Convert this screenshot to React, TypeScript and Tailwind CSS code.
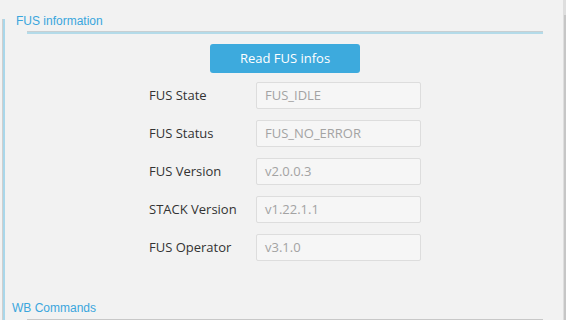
const fields = [
  { label: 'FUS State', value: 'FUS_IDLE' },
  { label: 'FUS Status', value: 'FUS_NO_ERROR' },
  { label: 'FUS Version', value: 'v2.0.0.3' },
  { label: 'STACK Version', value: 'v1.22.1.1' },
  { label: 'FUS Operator', value: 'v3.1.0' },
];

function GroupTitle({ text, indent }: { text: string; indent: string }) {
  return (
    <div className={`${indent} h-[14px] text-[12px] leading-[14px] text-[#3aa6dd] font-['Liberation_Sans',Arial,sans-serif]`}>
      {text}
    </div>
  );
}

export default function App() {
  return (
    <div className="w-[566px] h-[320px] bg-[#f2f2f2] flex overflow-hidden font-['Open_Sans',sans-serif]">
      {/* left group rail */}
      <div className="w-[5px] pl-[2px] pt-[19px] flex">
        <div className="w-[3px] border-l border-[#cfcfcf] bg-[#a9d7ea]" />
      </div>

      <main className="flex-1 flex flex-col">
        <div className="pt-[14px]">
          <GroupTitle text="FUS information" indent="pl-[11px]" />
        </div>
        <div className="mt-[3px] ml-[22px] mr-[20px]">
          <div className="h-px bg-[#c8cfd2]" />
          <div className="h-[2px] bg-[#b4dbe9]" />
        </div>

        <button className="mt-[10px] ml-[205px] w-[150px] h-[29px] rounded-[3px] bg-[#3daadd] text-white text-[13px] leading-[29px]">
          Read FUS infos
        </button>

        <div className="mt-[9px] flex flex-col gap-[11px] ml-[144px]">
          {fields.map((f) => (
            <div key={f.label} className="flex items-center">
              <span className="w-[107px] text-[13px] text-[#333333]">{f.label}</span>
              <div className="w-[165px] h-[27px] rounded-[2px] border border-[#dddddd] bg-[#f6f6f6] pl-[8px] text-[13px] leading-[25px] text-[#a3a3a3]">
                {f.value}
              </div>
            </div>
          ))}
        </div>

        <section className="mt-auto">
          <GroupTitle text="WB Commands" indent="pl-[7px]" />
          <div className="mt-[4px] ml-[22px] mr-[20px] h-px bg-[#c8c8c8]" />
        </section>
      </main>

      {/* right scroll track */}
      <div className="w-[3px] flex">
        <div className="w-px bg-[#dedede]" />
        <div className="w-[2px] flex flex-col">
          <div className="h-[15px] bg-[#dedede]" />
          <div className="flex-1 bg-[#c6c6c6]" />
        </div>
      </div>
    </div>
  );
}
